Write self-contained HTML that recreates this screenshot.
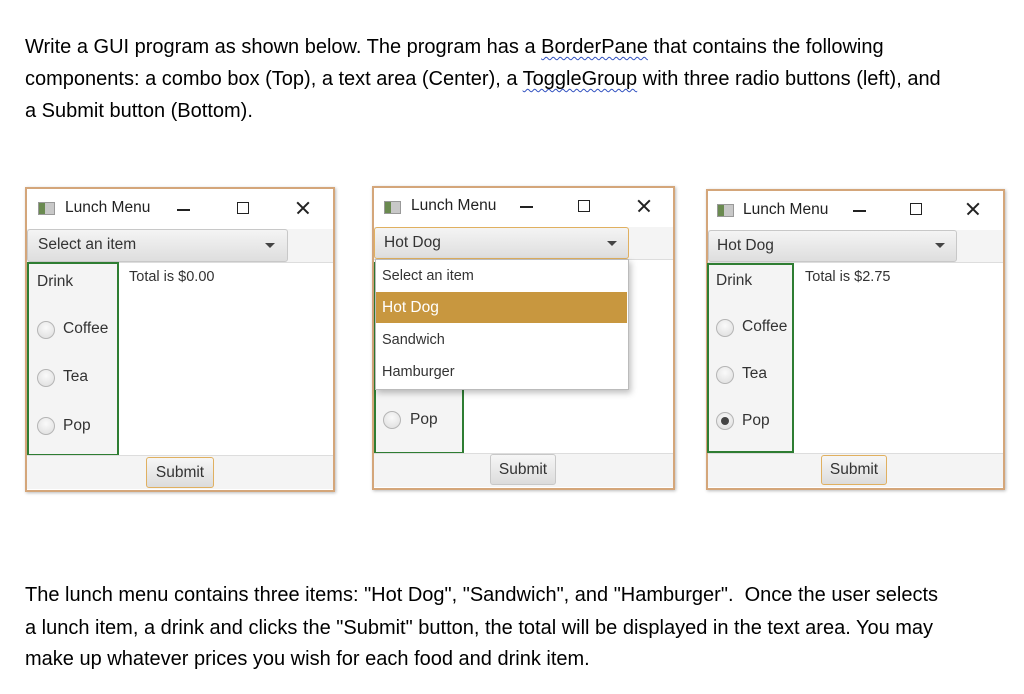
<!DOCTYPE html>
<html><head><meta charset="utf-8"><style>
body{margin:0;background:#fff;width:1024px;height:694px;overflow:hidden;position:relative;font-family:"Liberation Sans",sans-serif;}
.p{position:absolute;left:25px;font-size:20px;color:#000;white-space:nowrap;line-height:32px}
.a{position:absolute}
.t{position:absolute;font-size:14.5px;color:#333;white-space:nowrap;line-height:16px}
.win{position:absolute;border:2px solid #d4a67a;background:#fff;box-shadow:1px 1px 3px #bbb}
.ico{position:absolute;width:15px;height:11px;border:1px solid #999;background:linear-gradient(90deg,#6a8a50 0 40%,#c8c8c8 40%);}
.combo{position:absolute;border:1px solid #c8c8c8;border-radius:3px;background:linear-gradient(#f4f4f4,#dedede)}
.arr{position:absolute;width:0;height:0;border-left:5px solid transparent;border-right:5px solid transparent;border-top:5px solid #444}
.radio{position:absolute;width:16px;height:16px;border-radius:50%;border:1px solid #b5b5b5;background:radial-gradient(circle at 50% 35%,#fafafa,#dcdcdc)}
.btn{position:absolute;border-radius:3px;background:linear-gradient(#f6f6f6,#dcdcdc);font-size:15.5px;color:#333;text-align:center}
.wu{text-decoration:underline wavy #3050c0;text-decoration-thickness:1px;text-underline-offset:3px;text-decoration-skip-ink:none}
.x{position:absolute;width:14px;height:14px}
.x:before,.x:after{content:"";position:absolute;left:-1px;top:6px;width:16px;height:1.5px;background:#222;transform:rotate(45deg)}
.x:after{transform:rotate(-45deg)}
</style></head><body>
<div class="p" style="top:31px">Write a GUI program as shown below. The program has a <span class="wu">BorderPane</span> that contains the following</div>
<div class="p" style="top:63px">components: a combo box (Top), a text area (Center), a <span class="wu">ToggleGroup</span> with three radio buttons (left), and</div>
<div class="p" style="top:95px">a Submit button (Bottom).</div>
<div class="p" style="top:579px">The lunch menu contains three items: "Hot Dog", "Sandwich", and "Hamburger".&nbsp; Once the user selects</div>
<div class="p" style="top:612px">a lunch item, a drink and clicks the "Submit" button, the total will be displayed in the text area. You may</div>
<div class="p" style="top:643px">make up whatever prices you wish for each food and drink item.</div>

<!-- Window 1 -->
<div class="win" style="left:25px;top:187px;width:306px;height:301px"></div>
<div class="ico" style="left:38px;top:202px"></div>
<div class="t" style="left:65px;top:200px;font-size:15.5px;color:#222">Lunch Menu</div>
<div class="a" style="left:177px;top:209px;width:13px;height:1.5px;background:#222"></div>
<div class="a" style="left:237px;top:202px;width:10px;height:10px;border:1.5px solid #222"></div>
<div class="x" style="left:296px;top:201px"></div>
<div class="a" style="left:27px;top:229px;width:306px;height:33px;background:#f4f4f4"></div>
<div class="combo" style="left:27px;top:229px;width:259px;height:31px"></div>
<div class="t" style="left:38px;top:237px;font-size:15.5px">Select an item</div>
<div class="arr" style="left:265px;top:243px"></div>
<div class="a" style="left:27px;top:262px;width:306px;height:193px;background:#fff;border-top:1px solid #ddd"></div>
<div class="a" style="left:27px;top:262px;width:88px;height:190px;border:2px solid #2e7d32;background:#f4f4f4"></div>
<div class="t" style="left:37px;top:274px;font-size:15.5px">Drink</div>
<div class="radio" style="left:37px;top:321px"></div><div class="t" style="left:63px;top:321px;font-size:15.5px">Coffee</div>
<div class="radio" style="left:37px;top:369px"></div><div class="t" style="left:63px;top:369px;font-size:15.5px">Tea</div>
<div class="radio" style="left:37px;top:417px"></div><div class="t" style="left:63px;top:418px;font-size:15.5px">Pop</div>
<div class="t" style="left:129px;top:269px">Total is $0.00</div>
<div class="a" style="left:27px;top:455px;width:306px;height:33px;background:#f4f4f4;border-top:1px solid #ddd"></div>
<div class="btn" style="left:146px;top:457px;width:66px;height:29px;line-height:29px;border:1.5px solid #e0b060">Submit</div>

<!-- Window 2 -->
<div class="win" style="left:372px;top:186px;width:299px;height:300px"></div>
<div class="ico" style="left:384px;top:201px"></div>
<div class="t" style="left:411px;top:198px;font-size:15.5px;color:#222">Lunch Menu</div>
<div class="a" style="left:520px;top:206px;width:13px;height:1.5px;background:#222"></div>
<div class="a" style="left:578px;top:200px;width:10px;height:10px;border:1.5px solid #222"></div>
<div class="x" style="left:637px;top:199px"></div>
<div class="a" style="left:374px;top:227px;width:299px;height:32px;background:#f4f4f4"></div>
<div class="a" style="left:374px;top:259px;width:299px;height:194px;background:#fff;border-top:1px solid #ddd"></div>
<div class="a" style="left:374px;top:262px;width:86px;height:188px;border:2px solid #2e7d32;background:#f4f4f4"></div>
<div class="radio" style="left:383px;top:411px"></div><div class="t" style="left:410px;top:412px;font-size:15.5px">Pop</div>
<div class="a" style="left:374px;top:453px;width:299px;height:33px;background:#f4f4f4;border-top:1px solid #ddd"></div>
<div class="btn" style="left:490px;top:454px;width:64px;height:29px;line-height:29px;border:1px solid #c8c8c8">Submit</div>
<div class="combo" style="left:374px;top:227px;width:253px;height:30px;border:1.5px solid #e0b060"></div>
<div class="t" style="left:384px;top:235px;font-size:15.5px">Hot Dog</div>
<div class="arr" style="left:607px;top:241px"></div>
<div class="a" style="left:375px;top:259px;width:252px;height:129px;background:#fff;border:1px solid #bbb;box-shadow:2px 3px 6px rgba(0,0,0,.25)"></div>
<div class="t" style="left:382px;top:268px">Select an item</div>
<div class="a" style="left:376px;top:292px;width:251px;height:31px;background:#c8973f"></div>
<div class="t" style="left:382px;top:300px;color:#fff;font-size:15.5px">Hot Dog</div>
<div class="t" style="left:382px;top:332px">Sandwich</div>
<div class="t" style="left:382px;top:364px">Hamburger</div>

<!-- Window 3 -->
<div class="win" style="left:706px;top:189px;width:295px;height:297px"></div>
<div class="ico" style="left:717px;top:204px"></div>
<div class="t" style="left:743px;top:202px;font-size:15.5px;color:#222">Lunch Menu</div>
<div class="a" style="left:853px;top:210px;width:13px;height:1.5px;background:#222"></div>
<div class="a" style="left:910px;top:203px;width:10px;height:10px;border:1.5px solid #222"></div>
<div class="x" style="left:966px;top:202px"></div>
<div class="a" style="left:708px;top:230px;width:295px;height:32px;background:#f4f4f4"></div>
<div class="combo" style="left:708px;top:230px;width:247px;height:30px"></div>
<div class="t" style="left:717px;top:238px;font-size:15.5px">Hot Dog</div>
<div class="arr" style="left:935px;top:243px"></div>
<div class="a" style="left:708px;top:262px;width:295px;height:191px;background:#fff;border-top:1px solid #ddd"></div>
<div class="a" style="left:707px;top:263px;width:83px;height:186px;border:2px solid #2e7d32;background:#f4f4f4"></div>
<div class="t" style="left:716px;top:273px;font-size:15.5px">Drink</div>
<div class="radio" style="left:716px;top:319px"></div><div class="t" style="left:742px;top:319px;font-size:15.5px">Coffee</div>
<div class="radio" style="left:716px;top:366px"></div><div class="t" style="left:742px;top:366px;font-size:15.5px">Tea</div>
<div class="radio" style="left:716px;top:412px"><div class="a" style="left:4px;top:4px;width:8px;height:8px;border-radius:50%;background:#444"></div></div><div class="t" style="left:742px;top:413px;font-size:15.5px">Pop</div>
<div class="t" style="left:805px;top:269px">Total is $2.75</div>
<div class="a" style="left:708px;top:453px;width:295px;height:33px;background:#f4f4f4;border-top:1px solid #ddd"></div>
<div class="btn" style="left:821px;top:455px;width:64px;height:28px;line-height:28px;border:1.5px solid #e0b060">Submit</div>
</body></html>
